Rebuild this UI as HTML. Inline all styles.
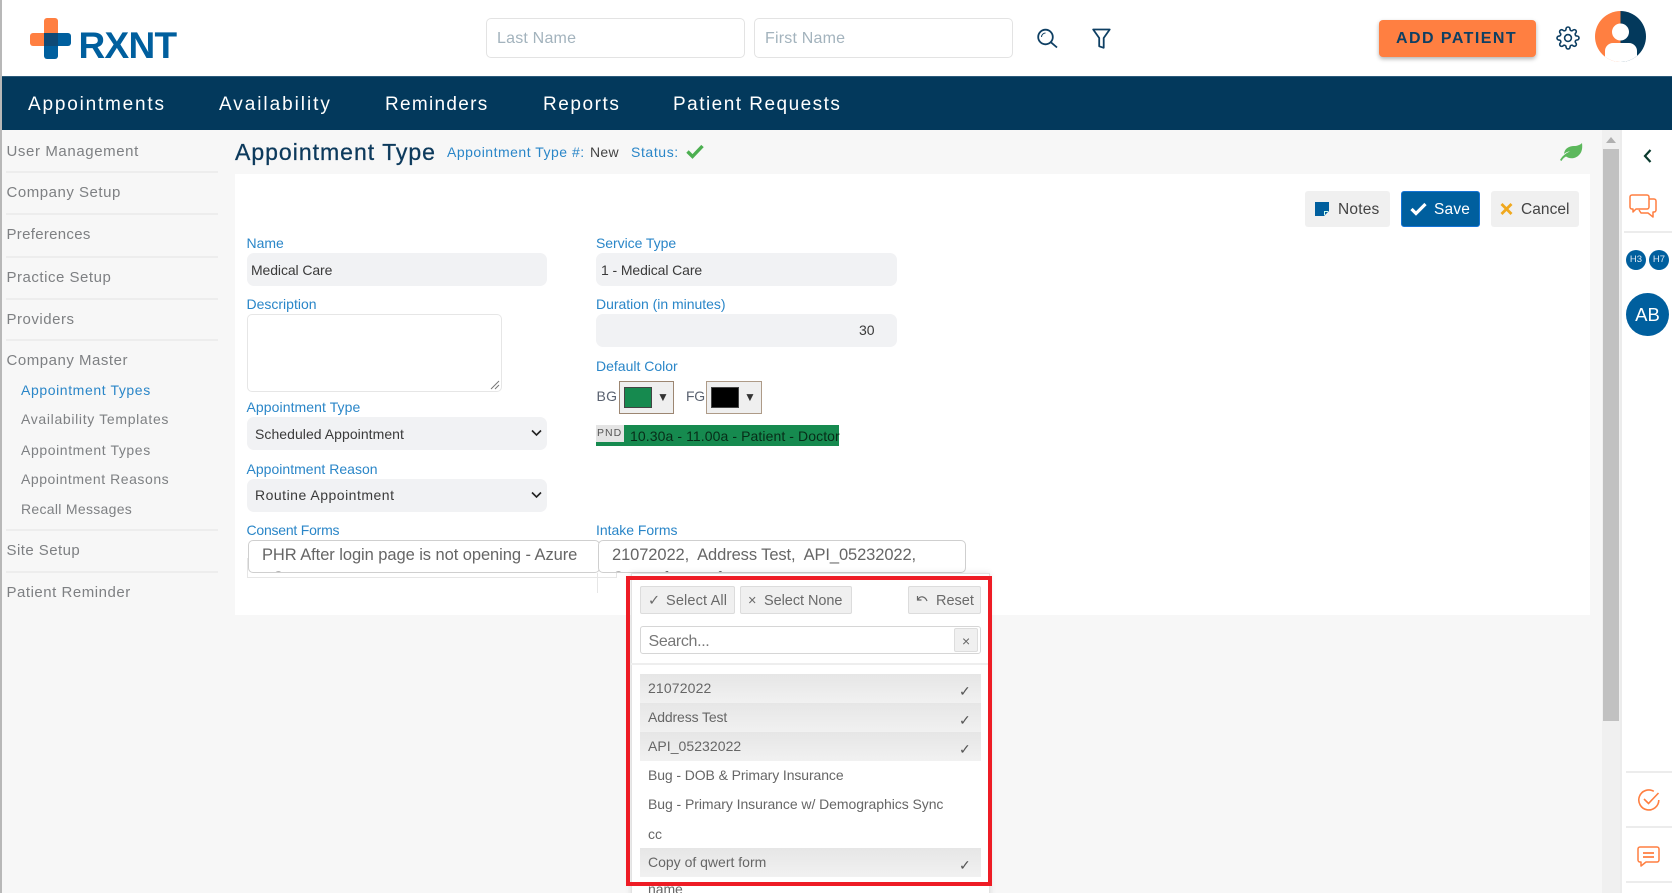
<!DOCTYPE html>
<html><head><meta charset="utf-8"><title>Appointment Type</title>
<style>
html,body{margin:0;padding:0;width:1672px;height:893px;overflow:hidden;background:#f7f7f7;font-family:"Liberation Sans",sans-serif}
#p{position:relative;width:1672px;height:893px;overflow:hidden;background:#f7f7f7}
#p div,#p span,#p svg{position:absolute;box-sizing:border-box}
.t{white-space:nowrap;line-height:20px;height:20px}
.nav{color:#fff;font-size:19px;letter-spacing:1.55px;top:95px}
.side{color:#7e8083;font-size:15px;letter-spacing:.52px;left:6.5px}
.sub{color:#7e8083;font-size:14px;letter-spacing:.6px;left:21px}
.hr{background:#ededed;height:2px;left:6px;width:212px}
.lb{color:#2a86c8;font-size:14px;letter-spacing:0}
.fld{background:#f1f2f4;border-radius:7px;height:33px;width:300px}
.val{color:#3a3a3a;font-size:14px;letter-spacing:0}
.btn{background:#f0f0f0;border-radius:3px;top:191px;height:36px}
.bt{font-size:15.5px;letter-spacing:.2px;color:#444;top:200px}
.dbtn{background:#f0f0f0;border:1px solid #dcdcdc;border-radius:2px;top:586px;height:28px}
.dt{font-size:14.5px;color:#6a6a6a;top:591px;letter-spacing:0}
.sel{left:640px;width:341px;height:29px;background:linear-gradient(#e6e6e6,#f1f1f1)}
.it{left:648px;color:#666;font-size:14px;letter-spacing:-.06px}
.ck{left:959px;color:#555;font-size:14px}
.box{background:#fff;border:1.5px solid #cfcfcf;border-radius:5px;top:540px;height:33px;overflow:hidden}
.boxt{color:#666;font-size:16.5px;white-space:nowrap;line-height:23px;top:2.5px}
</style></head><body><div id="p">
<div style="left:0;top:0;width:2px;height:893px;background:#b8b8b8"></div>
<div style="left:2px;top:0;width:1670px;height:76px;background:#fff"></div>
<div style="left:43.5px;top:18px;width:14px;height:27px;background:#ff7f41;border-radius:3px 3px 0 0"></div>
<div style="left:30px;top:33px;width:27.5px;height:12.5px;background:#ff7f41;border-radius:3px 0 0 3px"></div>
<div style="left:43.5px;top:33px;width:14px;height:26px;background:#005f9e;border-radius:0 0 3px 3px"></div>
<div style="left:43.5px;top:33px;width:27.5px;height:12.5px;background:#005f9e;border-radius:0 3px 3px 0"></div>
<div style="left:43.5px;top:33px;width:14px;height:12.5px;background:#0e4a76"></div>
<span class="t" style="left:78.5px;top:27.5px;height:36px;line-height:36px;font-size:37px;font-weight:700;color:#005f9e;letter-spacing:-.7px">RXNT</span>
<div style="left:486px;top:18px;width:259px;height:40px;background:#fff;border:1.5px solid #e3e3e3;border-radius:5px"></div>
<span class="t" style="left:497px;top:29px;font-size:16px;color:#a3b3bd;letter-spacing:.2px">Last Name</span>
<div style="left:754px;top:18px;width:259px;height:40px;background:#fff;border:1.5px solid #e3e3e3;border-radius:5px"></div>
<span class="t" style="left:765px;top:29px;font-size:16px;color:#a3b3bd;letter-spacing:.2px">First Name</span>
<svg style="left:1036px;top:27px" width="24" height="24" viewBox="0 0 24 24" fill="none" stroke="#0e3f63" stroke-width="1.8"><circle cx="9.5" cy="10" r="7.3"/><path d="M14.800 15.200l6.200 5.300"/><path d="M5.500 10a4 4 0 0 1 4-4" stroke-width="1"/></svg>
<svg style="left:1092px;top:28px" width="19" height="22" viewBox="0 0 19 22" fill="none" stroke="#0e3f63" stroke-width="1.800" stroke-linejoin="round"><path d="M1.200 1.500h16.500l-6 8.500v9.800l-4.500-1.500V10z"/></svg>
<div style="left:1379px;top:20px;width:157px;height:37px;background:#ff7f41;border-radius:4px;box-shadow:0 2px 4px rgba(0,0,0,.3)"></div>
<span class="t" style="left:1396px;top:28.5px;font-size:16px;font-weight:700;color:#0e3f63;letter-spacing:1.45px">ADD PATIENT</span>
<svg style="left:1556px;top:26px" width="24" height="24" viewBox="0 0 24 24" fill="none" stroke="#0e3f63" stroke-width="1.6"><circle cx="12" cy="12" r="3.4"/><path d="M19.4 15a1.65 1.65 0 0 0 .33 1.82l.06.06a2 2 0 0 1 0 2.83 2 2 0 0 1-2.83 0l-.06-.06a1.65 1.65 0 0 0-1.82-.33 1.65 1.65 0 0 0-1 1.51V21a2 2 0 0 1-2 2 2 2 0 0 1-2-2v-.09A1.65 1.65 0 0 0 9 19.4a1.65 1.65 0 0 0-1.82.33l-.06.06a2 2 0 0 1-2.83 0 2 2 0 0 1 0-2.83l.06-.06a1.65 1.65 0 0 0 .33-1.82 1.65 1.65 0 0 0-1.51-1H3a2 2 0 0 1-2-2 2 2 0 0 1 2-2h.09A1.65 1.65 0 0 0 4.6 9a1.65 1.65 0 0 0-.33-1.82l-.06-.06a2 2 0 0 1 0-2.83 2 2 0 0 1 2.83 0l.06.06a1.65 1.65 0 0 0 1.82.33H9a1.65 1.65 0 0 0 1-1.51V3a2 2 0 0 1 2-2 2 2 0 0 1 2 2v.09a1.65 1.65 0 0 0 1 1.51 1.65 1.65 0 0 0 1.82-.33l.06-.06a2 2 0 0 1 2.83 0 2 2 0 0 1 0 2.83l-.06.06a1.65 1.65 0 0 0-.33 1.82V9a1.65 1.65 0 0 0 1.51 1H21a2 2 0 0 1 2 2 2 2 0 0 1-2 2h-.09a1.65 1.65 0 0 0-1.51 1z"/></svg>
<svg style="left:1595px;top:11px" width="51" height="52" viewBox="0 0 51 52"><defs><clipPath id="a"><circle cx="25.5" cy="25.5" r="25.5"/></clipPath></defs><g clip-path="url(#a)"><rect width="26" height="52" fill="#ff7f41"/><rect x="25.5" width="26" height="52" fill="#03395c"/><circle cx="25.5" cy="21" r="8.5" fill="#fff"/><rect x="10" y="32" width="32" height="22" rx="8" fill="#fff"/></g></svg>

<div style="left:2px;top:76px;width:1670px;height:54px;background:#03395c;border-top:1px solid #2c5b7a"></div>
<span class="t nav" style="left:28px;letter-spacing:1.8px">Appointments</span>
<span class="t nav" style="left:219px;letter-spacing:1.95px">Availability</span>
<span class="t nav" style="left:385px;letter-spacing:1.3px">Reminders</span>
<span class="t nav" style="left:543px">Reports</span>
<span class="t nav" style="left:673px;letter-spacing:1.48px">Patient Requests</span>

<span class="t side" style="top:141.5px;letter-spacing:.6px">User Management</span><div class="hr" style="top:171px"></div>
<span class="t side" style="top:183px">Company Setup</span><div class="hr" style="top:213px"></div>
<span class="t side" style="top:224.5px;letter-spacing:.3px">Preferences</span><div class="hr" style="top:256px"></div>
<span class="t side" style="top:267.5px">Practice Setup</span><div class="hr" style="top:298px"></div>
<span class="t side" style="top:309.5px">Providers</span><div class="hr" style="top:339px"></div>
<span class="t side" style="top:351px">Company Master</span>
<span class="t sub" style="top:380px;color:#2a86c8">Appointment Types</span>
<span class="t sub" style="top:409px;letter-spacing:.67px">Availability Templates</span>
<span class="t sub" style="top:439.500px">Appointment Types</span>
<span class="t sub" style="top:469px;letter-spacing:.55px">Appointment Reasons</span>
<span class="t sub" style="top:499px;letter-spacing:.3px">Recall Messages</span>
<div class="hr" style="top:529px"></div>
<span class="t side" style="top:541px;letter-spacing:.45px">Site Setup</span><div class="hr" style="top:571px"></div>
<span class="t side" style="top:583px">Patient Reminder</span>

<span class="t" style="left:235px;top:142px;font-size:23px;letter-spacing:1px;color:#0d3a5c;-webkit-text-stroke:.3px #0d3a5c">Appointment Type</span>
<span class="t lb" style="left:447px;top:142px;letter-spacing:.5px">Appointment Type #:</span>
<span class="t" style="left:590px;top:142px;font-size:14px;color:#444;letter-spacing:.3px">New</span>
<span class="t lb" style="left:631px;top:142px;letter-spacing:.6px">Status:</span>
<svg style="left:686px;top:144px" width="18" height="15" viewBox="0 0 18 15" fill="none" stroke="#4caf50" stroke-width="3.4"><path d="M1.5 7.500l5 5L16.500 2"/></svg>
<svg style="left:1560px;top:143px" width="23" height="18" viewBox="0 0 23 18"><path d="M22 0C23 7 21 12 15.500 14.500C11.500 16 8 15 6 13.500C4 14.500 2.500 16 1.500 18L0 17C2 13.500 5 10.500 10 8.500C7.500 8.500 5.500 9.500 4 11C4.500 5.500 9 3 14 3C17 3 20 2 22 0Z" fill="#5cb85c"/></svg>

<div style="left:235px;top:174px;width:1355px;height:441px;background:#fff"></div>
<div class="btn" style="left:1305px;width:85px"></div>
<svg style="left:1315px;top:202px" width="14" height="14" viewBox="0 0 14 14"><path d="M0 0h14v9l-5 5H0z" fill="#005f9e"/><path d="M9.500 13v-3.500H13" fill="none" stroke="#cfe" stroke-width="1"/></svg>
<span class="t bt" style="left:1338px">Notes</span>
<div class="btn" style="left:1401px;width:79px;background:#005f9e;border:1px solid #1473d6"></div>
<svg style="left:1410px;top:202px" width="17" height="14" viewBox="0 0 17 14" fill="none" stroke="#fff" stroke-width="3.200"><path d="M1.500 7l4.500 4.500L15.500 2"/></svg>
<span class="t bt" style="left:1434px;color:#fff">Save</span>
<div class="btn" style="left:1491px;width:88px"></div>
<svg style="left:1500px;top:203px" width="13" height="12" viewBox="0 0 13 12" fill="none" stroke="#f0a81e" stroke-width="2.800"><path d="M1.500 1l10 10M11.500 1l-10 10"/></svg>
<span class="t bt" style="left:1521px;letter-spacing:.05px">Cancel</span>

<span class="t lb" style="left:246.500px;top:233px">Name</span>
<div class="fld" style="left:246.500px;top:253px"></div>
<span class="t val" style="left:251px;top:260px;letter-spacing:-.1px">Medical Care</span>
<span class="t lb" style="left:596px;top:233px;letter-spacing:-.05px">Service Type</span>
<div class="fld" style="left:596px;top:253px;width:301px"></div>
<span class="t val" style="left:601px;top:260px;letter-spacing:-.1px">1 - Medical Care</span>
<span class="t lb" style="left:246.500px;top:294px">Description</span>
<div style="left:246.500px;top:314px;width:255px;height:78px;background:#fff;border:1.500px solid #e6e6e6;border-radius:5px"></div>
<svg style="left:490px;top:380px" width="10" height="10" viewBox="0 0 10 10" stroke="#777" fill="none"><path d="M1 9l8-8M5 9l4-4"/></svg>
<span class="t lb" style="left:596px;top:294px;letter-spacing:-.02px">Duration (in minutes)</span>
<div class="fld" style="left:596px;top:314px;width:301px"></div>
<span class="t val" style="left:859px;top:320px">30</span>
<span class="t lb" style="left:246.500px;top:397px;letter-spacing:.08px">Appointment Type</span>
<div class="fld" style="left:246.500px;top:417px"></div>
<span class="t val" style="left:255px;top:424px;letter-spacing:.05px">Scheduled Appointment</span>
<svg style="left:531px;top:429px" width="11" height="8" viewBox="0 0 11 8" fill="none" stroke="#222" stroke-width="1.600"><path d="M1 1.500l4.500 4.500L10 1.500"/></svg>
<span class="t lb" style="left:246.500px;top:458.500px;letter-spacing:.02px">Appointment Reason</span>
<div class="fld" style="left:246.500px;top:478.500px"></div>
<span class="t val" style="left:255px;top:485px;letter-spacing:.5px">Routine Appointment</span>
<svg style="left:531px;top:491px" width="11" height="8" viewBox="0 0 11 8" fill="none" stroke="#222" stroke-width="1.600"><path d="M1 1.500l4.500 4.500L10 1.500"/></svg>
<span class="t lb" style="left:596px;top:355.500px">Default Color</span>
<span class="t" style="left:596.500px;top:386px;font-size:14px;color:#5a6270;letter-spacing:.3px">BG</span>
<div style="left:619px;top:381px;width:55px;height:33px;background:#efefef;border:1px solid #9c8672"></div>
<div style="left:624px;top:387px;width:28px;height:21px;background:#168a4f;border:1px solid #444"></div>
<span class="t" style="left:657px;top:387px;font-size:12px;color:#333">▼</span>
<span class="t" style="left:686px;top:386px;font-size:14px;color:#5a6270;letter-spacing:-.3px">FG</span>
<div style="left:706px;top:381px;width:56px;height:33px;background:#efefef;border:1px solid #ae9b88"></div>
<div style="left:711px;top:387px;width:28px;height:21px;background:#000;border:1px solid #444"></div>
<span class="t" style="left:744px;top:387px;font-size:12px;color:#333">▼</span>
<div style="left:596px;top:425px;width:243px;height:21px;background:#168a4f"></div>
<div style="left:596px;top:425px;width:28px;height:17px;background:#e4e4e4"></div>
<span class="t" style="left:597px;top:423px;font-size:10.500px;color:#555;letter-spacing:1px">PND</span>
<span class="t" style="left:630px;top:425.500px;font-size:14px;color:#072c18;letter-spacing:.09px">10.30a - 11.00a - Patient - Doctor</span>
<span class="t lb" style="left:246.500px;top:520px;letter-spacing:-.22px">Consent Forms</span>
<span class="t lb" style="left:596px;top:520px;letter-spacing:-.02px">Intake Forms</span>
<div style="left:246.500px;top:558px;width:370px;height:20px;border:1.500px solid #e6e6e6;border-top:0"></div>
<div style="left:596.500px;top:573px;width:1.500px;height:20px;background:#e6e6e6"></div>
<div class="box" style="left:248px;width:352px"><span class="boxt" style="left:13px;letter-spacing:-.07px">PHR After login page is not opening - Azure<br>- Copy</span></div>
<div class="box" style="left:598px;width:368px"><span class="boxt" style="left:13px;letter-spacing:-.1px">21072022,&nbsp; Address Test,&nbsp; API_05232022,<br>Copy of qwert form,</span></div>

<div style="left:631px;top:573px;width:359px;height:330px;background:#fff;border:1px solid #e2e2e2;box-shadow:0 0 6px rgba(0,0,0,.12)"></div>
<div class="dbtn" style="left:640px;width:95px"></div>
<span class="t dt" style="left:648px">✓</span><span class="t dt" style="left:666px;letter-spacing:.15px">Select All</span>
<div class="dbtn" style="left:740px;width:112px"></div>
<span class="t dt" style="left:748px">×</span><span class="t dt" style="left:764px;letter-spacing:-.05px">Select None</span>
<div class="dbtn" style="left:908px;width:73px"></div>
<svg style="left:916px;top:594px" width="12" height="11" viewBox="0 0 12 11" fill="none" stroke="#666" stroke-width="1.200"><path d="M2 5.500C4 1.500 9 2 11 7M1.500 2v4h4"/></svg>
<span class="t dt" style="left:936px">Reset</span>
<div style="left:640px;top:626px;width:341px;height:28px;background:#fff;border:1.500px solid #d6d6d6;border-radius:3px"></div>
<span class="t" style="left:648.500px;top:632px;font-size:16px;color:#777;letter-spacing:-.35px">Search...</span>
<div style="left:954px;top:628px;width:24px;height:24px;background:#f0f0f0;border:1px solid #ddd;border-radius:2px"></div>
<span class="t" style="left:962px;top:630.500px;font-size:14px;color:#666">×</span>
<div style="left:631px;top:663px;width:357px;height:2px;background:#eee"></div>
<div class="sel" style="top:674px"></div><div class="sel" style="top:703px"></div><div class="sel" style="top:732px"></div><div class="sel" style="top:848px"></div>
<span class="t it" style="top:678px;letter-spacing:.15px">21072022</span><span class="t ck" style="top:681px">✓</span>
<span class="t it" style="top:707px;letter-spacing:-.13px">Address Test</span><span class="t ck" style="top:710px">✓</span>
<span class="t it" style="top:736px;letter-spacing:.05px">API_05232022</span><span class="t ck" style="top:739px">✓</span>
<span class="t it" style="top:765px;letter-spacing:-.1px">Bug - DOB &amp; Primary Insurance</span>
<span class="t it" style="top:794px">Bug - Primary Insurance w/ Demographics Sync</span>
<span class="t it" style="top:823.500px">cc</span>
<span class="t it" style="top:852px;letter-spacing:0">Copy of qwert form</span><span class="t ck" style="top:855px">✓</span>
<span class="t it" style="top:879px">name</span>
<div style="left:626px;top:576px;width:366px;height:310px;border:4px solid #ee1c25"></div>

<div style="left:1602px;top:130px;width:18px;height:763px;background:#f0f0f0"></div>
<div style="left:1603px;top:149px;width:16px;height:572px;background:#c1c1c1"></div>
<div style="left:1606px;top:137px;width:0;height:0;border:5px solid transparent;border-top:0;border-bottom:6px solid #b0b0b0"></div>
<div style="left:1620px;top:130px;width:52px;height:763px;background:#fff;border-left:2px solid #ececec"></div>
<svg style="left:1641.500px;top:148px" width="11" height="16" viewBox="0 0 11 16" fill="none" stroke="#0a3a2e" stroke-width="2.200"><path d="M8.500 2L3 8l5.500 6"/></svg>
<svg style="left:1629px;top:194px" width="28" height="25" viewBox="0 0 28 25" fill="none" stroke="#ff7f41" stroke-width="1.500" stroke-linejoin="round"><path d="M3 1h15a2 2 0 0 1 2 2v10a2 2 0 0 1-2 2H7l-3 3v-3H3a2 2 0 0 1-2-2V3a2 2 0 0 1 2-2z"/><path d="M20 5h5a2 2 0 0 1 2 2v9a2 2 0 0 1-2 2h-1v5l-5-4h-7l-2-3"/></svg>
<div style="left:1624px;top:231px;width:48px;height:2px;background:#ececec"></div>
<div style="left:1626px;top:250px;width:20px;height:20px;border-radius:50%;background:#005f9e"></div>
<span class="t" style="left:1626px;top:250px;width:20px;text-align:center;font-size:9.500px;color:#dfeaf4">H3</span>
<div style="left:1649px;top:250px;width:20px;height:20px;border-radius:50%;background:#005f9e"></div>
<span class="t" style="left:1649px;top:250px;width:20px;text-align:center;font-size:9.500px;color:#dfeaf4">H7</span>
<div style="left:1626px;top:292.500px;width:43px;height:43px;border-radius:50%;background:#005f9e"></div>
<span class="t" style="left:1626px;top:304.500px;width:43px;text-align:center;font-size:18.500px;color:#fff">AB</span>
<div style="left:1626px;top:771px;width:46px;height:2px;background:#ececec"></div>
<svg style="left:1637px;top:788px" width="24" height="24" viewBox="0 0 24 24" fill="none" stroke="#ff7f41" stroke-width="1.600"><path d="M21.800 12a10 10 0 1 1-5-8.700"/><path d="M7 11l4.500 4.500L21.500 5"/></svg>
<div style="left:1626px;top:826px;width:46px;height:2px;background:#ececec"></div>
<svg style="left:1637px;top:846px" width="23" height="21" viewBox="0 0 23 21" fill="none" stroke="#ff7f41" stroke-width="1.500" stroke-linejoin="round"><path d="M3 1h17a2 2 0 0 1 2 2v11a2 2 0 0 1-2 2H9l-5 4v-4H3a2 2 0 0 1-2-2V3a2 2 0 0 1 2-2z"/><path d="M6 7h11M6 11h11" stroke-width="1.800"/></svg>
<div style="left:1626px;top:881px;width:46px;height:2px;background:#ececec"></div>
</div></body></html>
